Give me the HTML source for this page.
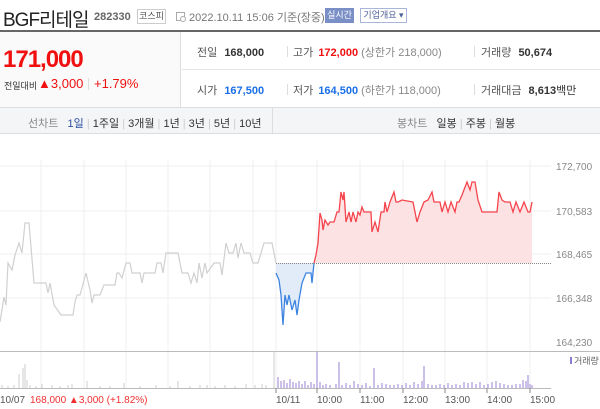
<!DOCTYPE html>
<html><head><meta charset="utf-8"><style>
*{margin:0;padding:0;box-sizing:border-box}
body{width:600px;height:409px;background:#fff;font-family:"Liberation Sans","Noto Sans CJK KR",sans-serif;position:relative;overflow:hidden;color:#333}
.a{position:absolute;white-space:nowrap}
.r{color:#f01010}.b{color:#1a6fe8}
</style></head><body>
<div class="a" style="left:3px;top:5px;font-size:19px;color:#222;letter-spacing:-1px">BGF리테일</div>
<div class="a" style="left:94px;top:11px;font-size:11px;color:#666;font-weight:bold">282330</div>
<div class="a" style="left:137px;top:9px;width:29px;height:15px;border:1px solid #ccc;font-size:9px;color:#555;text-align:center;line-height:13px">코스피</div>
<svg class="a" style="left:176px;top:10px" width="10" height="12"><rect x="0.5" y="2.5" width="8" height="8" fill="none" stroke="#aaa"/><circle cx="7" cy="9" r="2.5" fill="#fff" stroke="#aaa"/></svg>
<div class="a" style="left:189px;top:9px;font-size:11px;color:#777">2022.10.11 15:06 기준(장중)</div>
<div class="a" style="left:325px;top:8px;width:29px;height:15px;background:#7b8fc7;color:#fff;font-size:9px;text-align:center;line-height:15px">실시간</div>
<div class="a" style="left:360px;top:8px;width:47px;height:15px;border:1px solid #a9b6da;color:#4c5f9a;font-size:9px;text-align:center;line-height:13px">기업개요 ▾</div>
<div class="a" style="left:0;top:30px;width:600px;height:2px;background:#666"></div>
<div class="a" style="left:0;top:32px;width:181px;height:75px;background:#fafafa;border-right:1px solid #ddd"></div>
<div class="a r" style="left:3px;top:46px;font-size:24px;font-weight:bold;letter-spacing:-1px">171,000</div>
<div class="a" style="left:4px;top:79px;font-size:9px;color:#333">전일대비</div>
<div class="a r" style="left:38px;top:76px;font-size:13px">▲3,000</div>
<div class="a" style="left:88px;top:78px;width:1px;height:12px;background:#ddd"></div>
<div class="a r" style="left:94px;top:76px;font-size:13px">+1.79%</div>
<div class="a" style="left:182px;top:69px;width:418px;height:1px;background:#e5e5e5"></div>
<div class="a" style="left:197px;top:44px;font-size:11px"><span style="color:#555">전일</span> <b style="margin-left:4px">168,000</b></div>
<div class="a" style="left:287px;top:46px;width:1px;height:11px;background:#ddd"></div>
<div class="a" style="left:293px;top:44px;font-size:11px"><span style="color:#555">고가</span> <b class="r" style="margin-left:2px">172,000</b> <span style="color:#888">(상한가 218,000)</span></div>
<div class="a" style="left:474px;top:46px;width:1px;height:11px;background:#ddd"></div>
<div class="a" style="left:481px;top:44px;font-size:11px"><span style="color:#555">거래량</span> <b style="margin-left:4px">50,674</b></div>
<div class="a" style="left:197px;top:82px;font-size:11px"><span style="color:#555">시가</span> <b class="b" style="margin-left:4px">167,500</b></div>
<div class="a" style="left:287px;top:84px;width:1px;height:11px;background:#ddd"></div>
<div class="a" style="left:293px;top:82px;font-size:11px"><span style="color:#555">저가</span> <b class="b" style="margin-left:2px">164,500</b> <span style="color:#888">(하한가 118,000)</span></div>
<div class="a" style="left:474px;top:84px;width:1px;height:11px;background:#ddd"></div>
<div class="a" style="left:481px;top:82px;font-size:11px"><span style="color:#555">거래대금</span> <b style="margin-left:4px">8,613</b><span>백만</span></div>
<div class="a" style="left:0;top:107px;width:600px;height:27px;background:#f4f5f7;border-top:1px solid #ddd;border-bottom:1px solid #ddd"></div>
<div class="a" style="left:272px;top:108px;width:1px;height:25px;background:#ddd"></div>
<div class="a" style="left:28px;top:115px;font-size:11px;color:#333"><span style="color:#888">선차트</span>&nbsp;&nbsp; <span style="color:#2b4fa0">1일</span> <span style="color:#ccc">|</span> 1주일 <span style="color:#ccc">|</span> 3개월 <span style="color:#ccc">|</span> 1년 <span style="color:#ccc">|</span> 3년 <span style="color:#ccc">|</span> 5년 <span style="color:#ccc">|</span> 10년</div>
<div class="a" style="left:397px;top:115px;font-size:11px;color:#333"><span style="color:#888">봉차트</span>&nbsp;&nbsp; 일봉 <span style="color:#ccc">|</span> 주봉 <span style="color:#ccc">|</span> 월봉</div>
<svg class="a" style="left:0;top:134px" width="600" height="275" viewBox="0 134 600 275">
<g stroke="#efefef" stroke-width="1">
<line x1="0" y1="166" x2="551" y2="166"/><line x1="0" y1="211" x2="551" y2="211"/><line x1="0" y1="254" x2="551" y2="254"/><line x1="0" y1="298" x2="551" y2="298"/>
<line x1="41" y1="160" x2="41" y2="388"/><line x1="84" y1="160" x2="84" y2="388"/><line x1="126" y1="160" x2="126" y2="388"/><line x1="168" y1="160" x2="168" y2="388"/><line x1="210" y1="160" x2="210" y2="388"/><line x1="253" y1="160" x2="253" y2="388"/><line x1="276" y1="160" x2="276" y2="388"/><line x1="317" y1="160" x2="317" y2="388"/><line x1="360" y1="160" x2="360" y2="388"/><line x1="403" y1="160" x2="403" y2="388"/><line x1="445" y1="160" x2="445" y2="388"/><line x1="487" y1="160" x2="487" y2="388"/><line x1="530" y1="160" x2="530" y2="388"/>
</g>
<line x1="0" y1="351.5" x2="600" y2="351.5" stroke="#bbb"/>
<line x1="0" y1="388.5" x2="551" y2="388.5" stroke="#bbb"/>
<path d="M0,322 L4,297 6,305 8,263 12,270 15,255 19,243 22,253 25,223 29,223 34,283 46,283 48,293 50,283 54,305 61,315 73,315 75,302 77,295 80,295 86,273 90,290 92,303 94,295 100,295 104,285 115,285 117,273 119,273 122,278 126,263 130,263 132,273 140,273 142,283 144,273 155,273 157,263 161,263 163,273 166,253 178,253 180,263 182,273 188,273 191,283 194,273 197,283 199,263 202,278 205,263 207,273 214,263 220,263 222,275 226,243 229,253 233,253 236,243 238,258 241,243 244,253 250,253 253,263 258,263 261,253 264,243 270,243 272,243 276,263" fill="none" stroke="#d0d0d0" stroke-width="1.2"/>
<path d="M276,263 L276,273 279,280 281,295 283,325 285,295 287,305 289,295 292,310 295,300 297,315 299,300 302,283 306,273 311,273 312,283 314,263 Z" fill="#dbe7f7" opacity=".8"/>
<path d="M276,273 L279,280 281,295 283,325 285,295 287,305 289,295 292,310 295,300 297,315 299,300 302,283 306,273 311,273 312,283 314,263" fill="none" stroke="#3d84e0" stroke-width="1.3"/>
<path d="M314,263 L316,255 318,243 320,213 322,220 323,230 325,220 328,225 330,222 334,222 337,212 339,212 341,192 343,200 344,192 346,222 349,212 351,222 353,212 356,222 358,212 360,215 362,207 364,212 371,212 372,232 375,222 378,232 381,212 384,212 385,202 387,212 390,202 394,192 396,202 398,202 402,200 413,202 415,212 417,222 420,212 424,202 428,200 432,192 434,202 440,202 442,212 445,202 448,212 451,202 455,212 457,202 459,202 462,195 467,182 470,190 472,182 475,182 478,200 482,212 490,212 497,212 499,192 502,200 505,202 510,202 513,212 516,202 520,212 524,202 528,212 530,212 532,202 L532,263 Z" fill="#fde2e4"/>
<path d="M314,263 L316,255 318,243 320,213 322,220 323,230 325,220 328,225 330,222 334,222 337,212 339,212 341,192 343,200 344,192 346,222 349,212 351,222 353,212 356,222 358,212 360,215 362,207 364,212 371,212 372,232 375,222 378,232 381,212 384,212 385,202 387,212 390,202 394,192 396,202 398,202 402,200 413,202 415,212 417,222 420,212 424,202 428,200 432,192 434,202 440,202 442,212 445,202 448,212 451,202 455,212 457,202 459,202 462,195 467,182 470,190 472,182 475,182 478,200 482,212 490,212 497,212 499,192 502,200 505,202 510,202 513,212 516,202 520,212 524,202 528,212 530,212 532,202" fill="none" stroke="#f5444c" stroke-width="1.3"/>
<line x1="276" y1="263.5" x2="551" y2="263.5" stroke="#888" stroke-dasharray="1,1"/>
<g font-size="10" fill="#888" font-family="Liberation Sans,sans-serif">
<text x="556" y="170">172,700</text><text x="556" y="215">170,583</text><text x="556" y="258">168,465</text><text x="556" y="302">166,348</text><text x="556" y="346">164,230</text>
</g>
<path d="M2,388v-3M8,388v-2M14,388v-3M19,388v-14M23,388v-20M25,388v-24M27,388v-8M30,388v-3M36,388v-2M42,388v-4M52,388v-3M60,388v-2M68,388v-3M72,388v-4M87,388v-7M100,388v-2M110,388v-2M124,388v-5M140,388v-2M156,388v-3M170,388v-2M178,388v-7M190,388v-2M200,388v-3M207,388v-3M215,388v-2M225,388v-3M235,388v-2M246,388v-4M255,388v-3M262,388v-4M266,388v-3M274,388v-36" stroke="#ccc" stroke-width="1"/>
<path d="M278,388v-11M281,388v-7M284,388v-8M287,388v-5M290,388v-9M293,388v-6M296,388v-5M299,388v-7M302,388v-4M305,388v-7M308,388v-3M311,388v-6M314,388v-4M317,388v-36M320,388v-6M323,388v-3M326,388v-4M330,388v-3M336,388v-4M339,388v-26M342,388v-3M346,388v-5M350,388v-3M354,388v-7M358,388v-4M362,388v-3M366,388v-5M370,388v-2M374,388v-20M378,388v-3M382,388v-5M386,388v-4M390,388v-3M394,388v-3M398,388v-4M402,388v-3M406,388v-5M410,388v-3M414,388v-6M418,388v-4M422,388v-7M424,388v-22M428,388v-4M432,388v-3M436,388v-3M440,388v-4M444,388v-3M448,388v-5M452,388v-3M456,388v-4M460,388v-3M464,388v-6M468,388v-5M472,388v-6M476,388v-4M480,388v-6M484,388v-3M488,388v-4M492,388v-6M496,388v-7M500,388v-5M504,388v-4M508,388v-3M512,388v-3M516,388v-4M520,388v-4M523,388v-8M526,388v-7M528,388v-13M530,388v-4M532,388v-3" stroke="#9a86d3" stroke-width="1"/>
<rect x="570" y="357" width="2" height="7" fill="#8e7ad0"/>
<text x="574" y="364" font-size="9" fill="#666" font-family="Liberation Sans,Noto Sans CJK KR,sans-serif">거래량</text>
<g stroke="#888"><line x1="276" y1="388" x2="276" y2="393"/><line x1="317" y1="388" x2="317" y2="393"/><line x1="360" y1="388" x2="360" y2="393"/><line x1="403" y1="388" x2="403" y2="393"/><line x1="445" y1="388" x2="445" y2="393"/><line x1="487" y1="388" x2="487" y2="393"/><line x1="530" y1="388" x2="530" y2="393"/></g>
<g font-size="10" fill="#555" font-family="Liberation Sans,sans-serif">
<text x="0" y="403">10/07</text>
<text x="30" y="403" fill="#f03030">168,000 ▲3,000 (+1.82%)</text>
<text x="276" y="403">10/11</text><text x="317" y="403">10:00</text><text x="360" y="403">11:00</text><text x="403" y="403">12:00</text><text x="445" y="403">13:00</text><text x="487" y="403">14:00</text><text x="530" y="403">15:00</text>
</g>
</svg>
</body></html>
